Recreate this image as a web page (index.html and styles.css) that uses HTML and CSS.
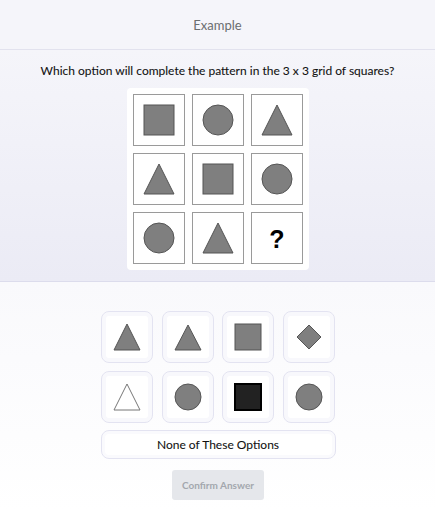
FILE: index.html
```html
<!DOCTYPE html>
<html>
<head>
<meta charset="utf-8">
<link rel="stylesheet" href="styles.css">
</head>
<body>
<header class="top-bar">Example</header>
<section class="question">
  <p class="prompt">Which option will complete the pattern in the 3 x 3 grid of squares?</p>
  <div class="matrix">
    <div class="cell"><svg width="32" height="32" viewBox="0 0 32 32"><rect x="1" y="1" width="30" height="30" class="shp"/></svg></div>
    <div class="cell"><svg width="32" height="32" viewBox="0 0 32 32"><circle cx="16" cy="16" r="15" class="shp"/></svg></div>
    <div class="cell"><svg width="32" height="32" viewBox="0 0 32 32"><polygon points="16,1 31,31 1,31" class="shp"/></svg></div>
    <div class="cell"><svg width="32" height="32" viewBox="0 0 32 32"><polygon points="16,1 31,31 1,31" class="shp"/></svg></div>
    <div class="cell"><svg width="32" height="32" viewBox="0 0 32 32"><rect x="1" y="1" width="30" height="30" class="shp"/></svg></div>
    <div class="cell"><svg width="32" height="32" viewBox="0 0 32 32"><circle cx="16" cy="16" r="15" class="shp"/></svg></div>
    <div class="cell"><svg width="32" height="32" viewBox="0 0 32 32"><circle cx="16" cy="16" r="15" class="shp"/></svg></div>
    <div class="cell"><svg width="32" height="32" viewBox="0 0 32 32"><polygon points="16,1 31,31 1,31" class="shp"/></svg></div>
    <div class="cell qmark">?</div>
  </div>
</section>
<section class="answers">
  <div class="options">
    <div class="opt"><svg width="28" height="28" viewBox="0 0 28 28"><polygon points="14,1 27,27 1,27" class="shp"/></svg></div>
    <div class="opt"><svg width="28" height="28" viewBox="0 0 28 28"><polygon points="14,2 27,27 1,27" class="shp"/></svg></div>
    <div class="opt"><svg width="28" height="28" viewBox="0 0 28 28"><rect x="1" y="1" width="26" height="26" class="shp"/></svg></div>
    <div class="opt"><svg width="28" height="28" viewBox="0 0 28 28"><polygon points="14,2 26,14 14,26 2,14" class="shp"/></svg></div>
    <div class="opt"><svg width="28" height="28" viewBox="0 0 28 28"><polygon points="14,1 27,27 1,27" class="hollow"/></svg></div>
    <div class="opt"><svg width="28" height="28" viewBox="0 0 28 28"><circle cx="14" cy="14" r="13" class="shp"/></svg></div>
    <div class="opt"><svg width="28" height="28" viewBox="0 0 28 28"><rect x="1" y="1" width="26" height="26" class="dark"/></svg></div>
    <div class="opt"><svg width="28" height="28" viewBox="0 0 28 28"><circle cx="14" cy="14" r="13" class="shp"/></svg></div>
  </div>
  <button class="none-btn">None of These Options</button>
  <button class="confirm-btn">Confirm Answer</button>
</section>
</body>
</html>
```
FILE: styles.css
```css
html, body {
  margin: 0;
  padding: 0;
}
body {
  width: 435px;
  height: 512px;
  overflow: hidden;
  font-family: "Lato", "Inter", sans-serif;
  background: #ffffff;
  color: #111;
}
.top-bar {
  height: 50px;
  display: flex;
  align-items: center;
  justify-content: center;
  font-size: 13px;
  color: #6b6e70;
  background: #f5f5fa;
  border-bottom: 1px solid #e2e2ee;
  box-sizing: border-box;
}
.question {
  background: linear-gradient(#f5f5fa, #ebebf5);
  border-bottom: 1px solid #dcdcec;
  height: 232px;
  box-sizing: border-box;
  display: flex;
  flex-direction: column;
  align-items: center;
  padding-top: 13px;
}
.prompt {
  margin: 0;
  font-size: 12px;
  line-height: 16px;
  color: #111;
  -webkit-text-stroke: 0.08px #111;
}
.matrix {
  margin-top: 9px;
  margin-left: 1px;
  background: #fff;
  border-radius: 4px;
  padding: 6px;
  display: grid;
  grid-template-columns: repeat(3, 52px);
  grid-auto-rows: 52px;
  gap: 7px;
}
.cell {
  box-sizing: border-box;
  border: 1px solid #9a9a9a;
  background: #fff;
  display: flex;
  align-items: center;
  justify-content: center;
}
.qmark {
  font-family: "Liberation Sans", Arial, sans-serif;
  font-weight: bold;
  font-size: 25px;
  color: #000;
  padding-top: 2px;
}
.shp {
  fill: #7f7f7f;
  stroke: #555;
  stroke-width: 1;
}
.hollow {
  fill: #fff;
  stroke: #777;
  stroke-width: 1;
}
.dark {
  fill: #222;
  stroke: #000;
  stroke-width: 2;
}
.answers {
  height: 230px;
  background: linear-gradient(#f9f9fc, #ffffff);
  display: flex;
  flex-direction: column;
  align-items: center;
  padding-top: 29px;
  box-sizing: border-box;
}
.options {
  margin-left: 1px;
  display: grid;
  grid-template-columns: repeat(4, 52px);
  grid-auto-rows: 52px;
  column-gap: 8.5px;
  row-gap: 8px;
}
.opt {
  box-sizing: border-box;
  border: 1px solid #e3e3f1;
  border-radius: 8px;
  background: #fff;
  box-shadow: inset 0 0 0 4px #f8f8fc;
  display: flex;
  align-items: center;
  justify-content: center;
}
.none-btn {
  margin-top: 7px;
  margin-left: 1px;
  width: 235px;
  height: 29px;
  border: 1px solid #e3e3f1;
  border-radius: 8px;
  background: #fff;
  font-family: inherit;
  font-size: 12px;
  color: #111;
  -webkit-text-stroke: 0.08px #111;
  box-shadow: inset 0 0 0 3px #fafafd;
}
.confirm-btn {
  margin-top: 11px;
  margin-left: 1px;
  width: 92px;
  height: 30px;
  border: none;
  border-radius: 3px;
  background: #e5e7eb;
  color: #a3a7ae;
  font-family: inherit;
  font-weight: bold;
  font-size: 10px;
}
```
